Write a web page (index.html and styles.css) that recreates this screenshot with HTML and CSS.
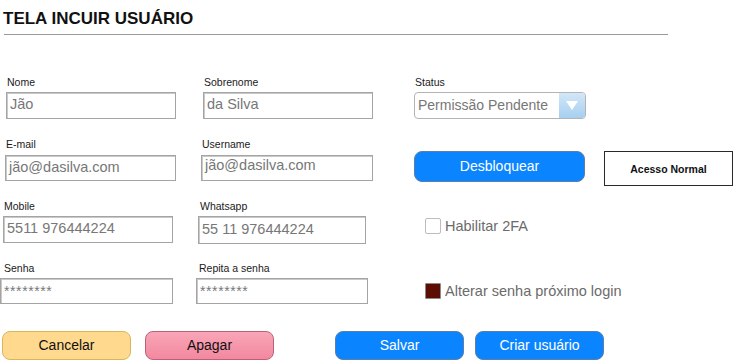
FILE: index.html
```html
<!DOCTYPE html>
<html lang="pt-BR">
<head>
<meta charset="utf-8">
<title>Tela incluir usuário</title>
<link rel="stylesheet" href="styles.css">
</head>
<body>
<div class="page">
  <header class="header">
    <h1 class="title">TELA INCUIR USUÁRIO</h1>
    <div class="rule"></div>
  </header>

  <div class="row row1">
    <div class="field f-nome">
      <div class="label">Nome</div>
      <div class="input">Jão</div>
    </div>
    <div class="field f-sobrenome">
      <div class="label">Sobrenome</div>
      <div class="input">da Silva</div>
    </div>
    <div class="field f-status">
      <div class="label">Status</div>
      <div class="select">
        <span class="select-text">Permissão Pendente</span>
        <span class="select-btn">
          <svg width="12" height="9" viewBox="0 0 12 9"><polygon points="0,0 12,0 6,9" fill="#ffffff"/></svg>
        </span>
      </div>
    </div>
  </div>

  <div class="row row2">
    <div class="field f-email">
      <div class="label">E-mail</div>
      <div class="input">jão@dasilva.com</div>
    </div>
    <div class="field f-username">
      <div class="label">Username</div>
      <div class="input input-high">jão@dasilva.com</div>
    </div>
    <div class="btn btn-blue btn-desbloquear">Desbloquear</div>
    <div class="acesso">Acesso Normal</div>
  </div>

  <div class="row row3">
    <div class="field f-mobile">
      <div class="label">Mobile</div>
      <div class="input">5511 976444224</div>
    </div>
    <div class="field f-whatsapp">
      <div class="label">Whatsapp</div>
      <div class="input input-tall">55 11 976444224</div>
    </div>
    <div class="check check-2fa">
      <span class="box"></span>
      <span class="check-text">Habilitar 2FA</span>
    </div>
  </div>

  <div class="row row4">
    <div class="field f-senha">
      <div class="label">Senha</div>
      <div class="input input-pass">********</div>
    </div>
    <div class="field f-repita">
      <div class="label">Repita a senha</div>
      <div class="input input-pass">********</div>
    </div>
    <div class="check check-alterar">
      <span class="box box-on"></span>
      <span class="check-text">Alterar senha próximo login</span>
    </div>
  </div>

  <div class="row actions">
    <div class="btn btn-yellow b-cancelar">Cancelar</div>
    <div class="btn btn-pink b-apagar">Apagar</div>
    <div class="btn btn-blue b-salvar">Salvar</div>
    <div class="btn btn-blue b-criar">Criar usuário</div>
  </div>
</div>
</body>
</html>
```

FILE: styles.css
```css
html, body {
  margin: 0;
  padding: 0;
  background: #ffffff;
}

body {
  font-family: "Liberation Sans", Arial, sans-serif;
  color: #1a1a1a;
  width: 733px;
  height: 360px;
  overflow: hidden;
}

.page {
  display: flex;
  flex-direction: column;
}

/* header */
.header {
  padding-top: 9px;
}

.title {
  margin: 0 0 0 3px;
  font-size: 17px;
  line-height: 20px;
  font-weight: bold;
  color: #111;
}

.rule {
  margin: 5px 0 0 4px;
  width: 664px;
  height: 1px;
  background: #9a9a9a;
}

/* rows */
.row {
  display: flex;
  align-items: flex-start;
}

.row1 { margin-top: 41px; }
.row2 { margin-top: 19px; }
.row3 { margin-top: 14px; }
.row4 { margin-top: 18px; }
.actions { margin-top: 27px; }

.field {
  display: flex;
  flex-direction: column;
}

.label {
  font-size: 10.5px;
  line-height: 13px;
  height: 13px;
  margin-bottom: 3px;
  padding-left: 1px;
  color: #1a1a1a;
}

.input {
  box-sizing: border-box;
  height: 27px;
  border: 1px solid #a4a4a4;
  box-shadow: inset 1px 1px 0 #c9c9c9;
  padding: 2px 0 0 3px;
  font-size: 14.5px;
  line-height: 18px;
  color: #777777;
  white-space: nowrap;
}

.input-high { padding-top: 0; }
.input-tall { height: 28px; padding-top: 3px; }
.input-pass { padding-top: 3px; font-size: 14px; letter-spacing: 0.6px; }

/* row 1 */
.f-nome { margin-left: 6px; width: 170px; }
.f-sobrenome { margin-left: 27px; width: 170px; }
.f-status { margin-left: 41px; width: 172px; }

.select {
  box-sizing: border-box;
  height: 27px;
  border: 1px solid #b4b4b4;
  border-radius: 4px;
  display: flex;
  overflow: hidden;
}

.select-text {
  flex: 1;
  padding: 3px 0 0 3px;
  font-size: 14px;
  line-height: 18px;
  color: #777777;
  white-space: nowrap;
}

.select-btn {
  width: 26px;
  display: flex;
  align-items: center;
  justify-content: center;
  background: linear-gradient(#d3e7f8, #a6cff0);
}

/* row 2 */
.row2 .label { margin-bottom: 4px; }
.row2 .input { height: 26px; }
.f-email { margin-left: 5px; width: 171px; }
.f-username { margin-left: 25px; width: 172px; }

.btn {
  box-sizing: border-box;
  display: flex;
  align-items: center;
  justify-content: center;
  font-size: 14px;
  border-radius: 8px;
  white-space: nowrap;
}

.btn-blue {
  background: #0a85ff;
  border: 1px solid #5d7ea8;
  color: #ffffff;
}

.btn-desbloquear {
  margin-left: 41px;
  margin-top: 13px;
  width: 171px;
  height: 31px;
  padding-bottom: 2px;
}

.acesso {
  box-sizing: border-box;
  margin-left: 19px;
  margin-top: 13px;
  width: 129px;
  height: 35px;
  border: 1.5px solid #2a2a2a;
  display: flex;
  align-items: center;
  justify-content: center;
  font-size: 10.5px;
  font-weight: bold;
  color: #111;
  padding-top: 1px;
}

/* row 3 */
.f-mobile { margin-left: 3px; width: 170px; }
.f-whatsapp { margin-left: 25px; width: 168px; }
.f-mobile .label { padding-left: 1px; }
.f-whatsapp .label { padding-left: 2px; }

.check {
  display: flex;
  align-items: center;
}

.check-2fa { margin-left: 59px; margin-top: 18px; }
.check-alterar { margin-left: 57px; margin-top: 21px; }

.box {
  box-sizing: border-box;
  width: 16px;
  height: 16px;
  border: 1.5px solid #bdbdbd;
  border-radius: 2px;
  background: #ffffff;
  margin-right: 4px;
}

.box-on {
  background: #5c0e02;
  border: 1px solid #8a8a8a;
  border-radius: 1px;
}

.check-text {
  font-size: 14.5px;
  line-height: 16px;
  color: #6b6b6b;
}

/* row 4 */
.f-senha { margin-left: 0; width: 173px; }
.f-senha .label { padding-left: 4px; }
.f-repita { margin-left: 23px; width: 172px; }
.f-repita .label { padding-left: 3px; }
.row4 .input { height: 26px; }

/* actions */
.actions .btn {
  width: 129px;
  height: 29px;
  padding-bottom: 1px;
}

.btn-yellow {
  background: #ffd98e;
  border: 1px solid #d8b75b;
  color: #111;
}

.btn-pink {
  background: linear-gradient(#f9a6b8, #f3889f);
  border: 1px solid #bb6177;
  color: #111;
}

.b-cancelar { margin-left: 2px; }
.b-apagar { margin-left: 14px; }
.b-salvar { margin-left: 61px; }
.b-criar { margin-left: 11px; }
```
